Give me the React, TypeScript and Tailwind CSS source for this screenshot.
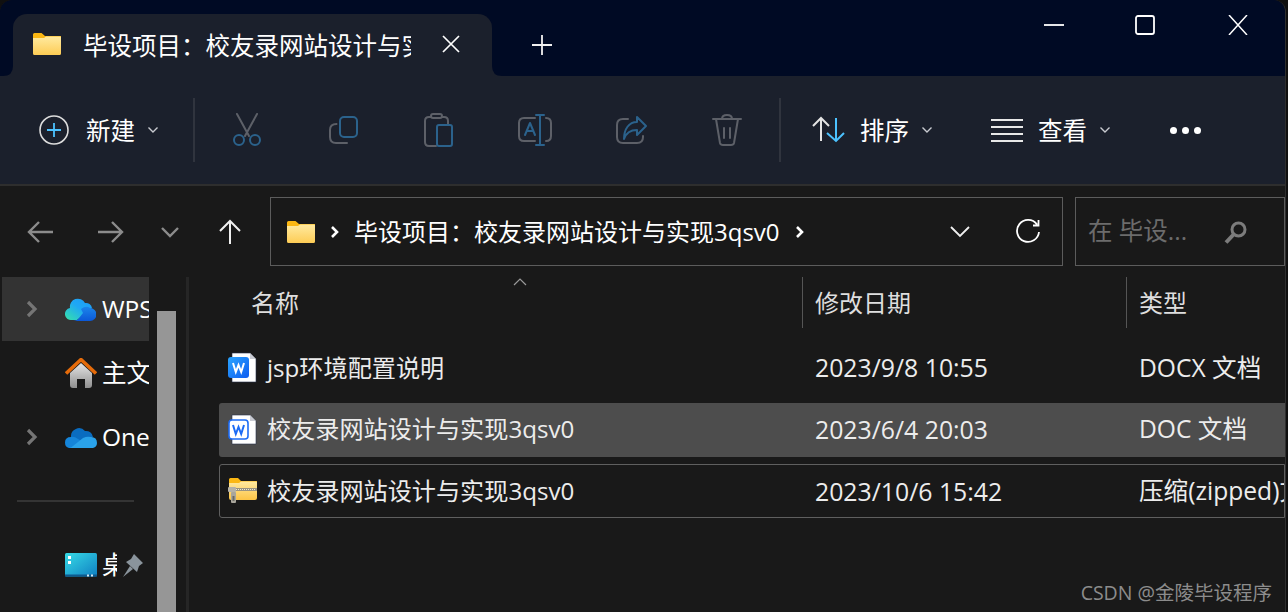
import type { ReactNode } from "react";

const GREY = "#5d6068";
const BLUE = "#2b628c";

function Folder({ w = 28, h = 22 }: { w?: number; h?: number }) {
  return (
    <svg width={w} height={h} viewBox="0 0 28 22" className="shrink-0">
      <defs>
        <linearGradient id="fold" x1="0" y1="0" x2="0" y2="1">
          <stop offset="0" stopColor="#ffeaa0" />
          <stop offset="1" stopColor="#fdcc55" />
        </linearGradient>
      </defs>
      <path d="M0 1.5Q0 0 1.5 0H8.5L12 3H28V8H0Z" fill="#fbb713" />
      <path d="M0 5H11L13 3.5H27Q28 3.5 28 4.5V20.5Q28 22 26.5 22H1.5Q0 22 0 20.5Z" fill="url(#fold)" />
    </svg>
  );
}

function WordIcon({ selected }: { selected?: boolean }) {
  return (
    <svg width="29" height="31" viewBox="0 0 29 31" className="shrink-0">
      <defs>
        <linearGradient id="wd" x1="0" y1="0" x2="1" y2="1">
          <stop offset="0" stopColor="#2ba5ff" />
          <stop offset="1" stopColor="#0e5cf0" />
        </linearGradient>
      </defs>
      <path d="M4 1H22L28 7V30H4Z" fill="#fff" stroke="#26304a" strokeWidth="0.6" />
      <path d="M22 1V7H28Z" fill="#c9cbd2" />
      <rect
        x={selected ? 1 : 0}
        y={selected ? 6 : 5}
        width={selected ? 19 : 21}
        height={selected ? 19 : 21}
        rx="3"
        fill={selected ? "#fff" : "url(#wd)"}
        stroke={selected ? "#1d6cf5" : "none"}
        strokeWidth="1.6"
      />
      <path
        d="M5 11L7.8 20L10.5 13L13.2 20L16 11"
        fill="none"
        stroke={selected ? "#1d6cf5" : "#fff"}
        strokeWidth="2"
      />
    </svg>
  );
}

function ZipIcon() {
  return (
    <svg width="29" height="26" viewBox="0 0 29 26" className="shrink-0">
      <defs>
        <linearGradient id="zipf" x1="0" y1="0" x2="0" y2="1">
          <stop offset="0" stopColor="#ffe9a0" />
          <stop offset="1" stopColor="#fcc445" />
        </linearGradient>
      </defs>
      <path d="M1 1.5Q1 0 2.500 0H10L13 3H29V8H1Z" fill="#fbb713" />
      <path d="M1 5H11L13 3.500H28Q29 3.500 29 4.500V20Q29 22 27 22H3Q1 22 1 20Z" fill="url(#zipf)" />
      <rect x="1" y="10" width="28" height="3" fill="#9a9482" />
      <path d="M4 11.500H28" stroke="#f1ead0" strokeWidth="1" strokeDasharray="1 1" />
      <rect x="0" y="9" width="8" height="5" rx="1" fill="#b5b2a8" />
      <rect x="3" y="14" width="5" height="11" rx="1" fill="#a9a69c" />
      <rect x="4.500" y="18" width="2" height="5" fill="#6c6a62" />
    </svg>
  );
}

function WpsCloud() {
  return (
    <svg width="31" height="23" viewBox="0 0 31 23" className="shrink-0">
      <defs>
        <linearGradient id="wa" x1="0" y1="1" x2="1" y2="0">
          <stop offset="0" stopColor="#36e3a8" />
          <stop offset="0.55" stopColor="#1fa8f5" />
          <stop offset="1" stopColor="#1c9bf5" />
        </linearGradient>
        <linearGradient id="wb" x1="0" y1="0" x2="0" y2="1">
          <stop offset="0" stopColor="#1c86ea" />
          <stop offset="1" stopColor="#0b58d8" />
        </linearGradient>
      </defs>
      <path d="M5 10A8 8 0 0 1 20 5A6 6 0 0 1 27 10L12 22H7A6 6 0 0 1 5 10Z" fill="url(#wa)" />
      <path d="M16 11Q21 7 25 10A6.500 6.500 0 0 1 25 23H8Q12 23 14 20L18 15Z" fill="url(#wb)" />
    </svg>
  );
}

function HomeIcon() {
  return (
    <svg width="32" height="30" viewBox="0 0 32 30" className="shrink-0">
      <defs>
        <linearGradient id="hm" x1="0" y1="0" x2="0" y2="1">
          <stop offset="0" stopColor="#e6e6e6" />
          <stop offset="1" stopColor="#8f8f8f" />
        </linearGradient>
      </defs>
      <path d="M5 15L16 5L27 15V27Q27 30 24 30H20V21H12V30H8Q5 30 5 27Z" fill="url(#hm)" />
      <path d="M1 15.500L16 1.500L31 15.500" fill="none" stroke="#e56b0a" strokeWidth="3.600" strokeLinejoin="round" />
    </svg>
  );
}

function OneDrive() {
  return (
    <svg width="32" height="21" viewBox="0 0 32 21" className="shrink-0">
      <path d="M6 10A8 8 0 0 1 20 4A7 7 0 0 1 28 10L14 18Z" fill="#0a6cc0" />
      <path d="M4 21Q0 20 0 15.500Q0 10 6 10Q9 9 13 12L18 15L12 21Z" fill="#1585da" />
      <path d="M4 21H28Q32 20 32 16Q32 10 26 10Q22 9 18 11L8 19Q6 21 4 21Z" fill="#2aa2ea" />
    </svg>
  );
}

function DesktopIcon() {
  return (
    <svg width="32" height="24" viewBox="0 0 32 24" className="shrink-0">
      <defs>
        <linearGradient id="dk" x1="0" y1="0" x2="1" y2="1">
          <stop offset="0" stopColor="#37dbe6" />
          <stop offset="1" stopColor="#0f7fc2" />
        </linearGradient>
      </defs>
      <rect width="32" height="23.500" rx="1.500" fill="url(#dk)" />
      <rect y="21.500" width="32" height="2" fill="#0d5a8f" />
      <rect x="3" y="3" width="3" height="3" fill="#fff" />
      <rect x="3" y="8" width="3" height="3" fill="#fff" />
      <rect x="22" y="21.500" width="2" height="2" fill="#cfe9f5" />
      <rect x="26" y="21.500" width="2" height="2" fill="#cfe9f5" />
    </svg>
  );
}

function PinIcon() {
  return (
    <svg width="21" height="23" viewBox="0 0 21 23" className="shrink-0">
      <path d="M12 0L21 9L17 12L15 18L4 8L9 5Z" fill="#8a949c" />
      <path d="M8 12L11 15L1 23Z" fill="#8a949c" />
    </svg>
  );
}

function ToolIcon({ children }: { children: ReactNode }) {
  return (
    <div className="flex w-[96px] justify-center">
      <svg width="40" height="40" viewBox="0 0 40 40" fill="none" strokeWidth="2" strokeLinecap="round" strokeLinejoin="round">
        {children}
      </svg>
    </div>
  );
}

function Chevron({ color = "#c9cbd0", size = 12 }: { color?: string; size?: number }) {
  return (
    <svg width={size} height={size} viewBox="0 0 12 12" fill="none" className="shrink-0">
      <path d="M1.500 3.500L6 8L10.500 3.500" stroke={color} strokeWidth="1.400" />
    </svg>
  );
}

function Line({ className }: { className: string }) {
  return <div className={`shrink-0 ${className}`} />;
}

function TitleBar() {
  return (
    <div className="flex h-[76px] shrink-0 items-start bg-[#000a24]">
      <div className="relative mt-[14px] ml-[13px] flex h-[62px] w-[479px] shrink-0 items-center rounded-t-[14px] bg-[#1b202c] pl-[20px] text-white">
        <svg width="10" height="10" viewBox="0 0 10 10" className="absolute bottom-0 -left-[10px]">
          <path d="M10 0V10H0Q10 10 10 0Z" fill="#1b202c" />
        </svg>
        <svg width="10" height="10" viewBox="0 0 10 10" className="absolute right-[-10px] bottom-0">
          <path d="M0 0V10H10Q0 10 0 0Z" fill="#1b202c" />
        </svg>
        <div className="-mt-[3px] flex items-center">
          <Folder />
          <div className="mt-[5px] ml-[22px] w-[328px] overflow-hidden text-[24.5px] leading-[32px] whitespace-nowrap">毕设项目：校友录网站设计与实现3qsv0</div>
          <svg width="20" height="20" viewBox="0 0 20 20" fill="none" stroke="#fff" strokeWidth="1.700" className="ml-[30px]">
            <path d="M2 2L18 18M18 2L2 18" />
          </svg>
        </div>
      </div>
      <svg width="20" height="20" viewBox="0 0 20 20" fill="none" stroke="#f0f0f0" strokeWidth="1.800" className="mt-[35px] ml-[40px] shrink-0">
        <path d="M10 0V20M0 10H20" />
      </svg>
      <div className="mt-[15px] ml-auto flex items-start pr-[37px]">
        <svg width="20" height="20" viewBox="0 0 20 20" fill="none" stroke="#fff" strokeWidth="1.800">
          <path d="M0 10H20" />
        </svg>
        <svg width="20" height="20" viewBox="0 0 20 20" fill="none" stroke="#fff" strokeWidth="1.800" className="ml-[71px]">
          <rect x="1" y="1" width="18" height="18" rx="2" />
        </svg>
        <svg width="20" height="20" viewBox="0 0 20 20" fill="none" stroke="#fff" strokeWidth="1.500" className="ml-[73px]">
          <path d="M1 0L19 20M19 0L1 20" />
        </svg>
      </div>
    </div>
  );
}

function Toolbar() {
  return (
    <div className="flex h-[110px] shrink-0 border-b-2 border-[#2e2e2e] bg-[#1b202c] text-white">
      <div className="flex h-[108px] items-center pl-[39px] text-[24.5px]">
        <svg width="30" height="30" viewBox="0 0 30 30" fill="none" className="shrink-0">
          <circle cx="15" cy="15" r="14" stroke="#dcdcdc" strokeWidth="1.600" />
          <path d="M15 8V22M8 15H22" stroke="#4cc2ff" strokeWidth="1.800" />
        </svg>
        <span className="mt-[2px] ml-[17px]">新建</span>
        <div className="ml-[12px]">
          <Chevron />
        </div>
        <Line className="ml-[34px] h-[64px] w-[2px] bg-[#30343e]" />
        <div className="ml-[4px] flex">
          <ToolIcon>
            <path d="M10 4L22 26M30 4L18 26" stroke={GREY} />
            <circle cx="12" cy="30" r="5" stroke={BLUE} />
            <circle cx="28" cy="30" r="5" stroke={BLUE} />
          </ToolIcon>
          <ToolIcon>
            <path d="M13.500 14Q7 14 7 20V27Q7 33 13 33H24" stroke={GREY} />
            <rect x="17" y="7" width="17" height="20" rx="4" stroke={BLUE} />
          </ToolIcon>
          <ToolIcon>
            <path d="M12 7H10Q6 7 6 11V32Q6 36 10 36H17M23 7H25Q29 7 29 11V14" stroke={GREY} />
            <rect x="12" y="4" width="11" height="4" rx="2" stroke={GREY} />
            <rect x="18" y="15" width="15" height="21" rx="2" stroke={BLUE} />
          </ToolIcon>
          <ToolIcon>
            <path d="M20 8H9Q4 8 4 13V26Q4 31 9 31H20M31 8Q36 8 36 13V26Q36 31 31 31" stroke={GREY} />
            <path d="M25 5V35M21 5H29M21 35H29M10 25L15 13L20 25M12 21H18" stroke={BLUE} />
          </ToolIcon>
          <ToolIcon>
            <path d="M17 9H12Q6 9 6 15V27Q6 33 12 33H26Q32 33 32 27V26" stroke={GREY} />
            <path d="M26 7L35 16L26 25V20C19 20 15 23 13 29C13 19 18 12 26 12Z" stroke={BLUE} />
          </ToolIcon>
          <ToolIcon>
            <path d="M6 9H34M9 9L13 33Q13.500 35 16 35H24Q26.500 35 27 33L31 9M15 9Q15 5 20 5Q25 5 25 9M17 18V28M23 18V28" stroke={GREY} />
          </ToolIcon>
        </div>
        <Line className="ml-[4px] h-[64px] w-[2px] bg-[#30343e]" />
        <svg width="40" height="40" viewBox="0 0 40 40" fill="none" strokeWidth="2" className="ml-[29px] shrink-0">
          <path d="M11 8V31M3 16L11 8L19 16" stroke="#e4e4e4" />
          <path d="M26 8V31M17 23L26 31L34 23" stroke="#4cc2ff" />
        </svg>
        <span className="mt-[2px] ml-[10px]">排序</span>
        <div className="ml-[12px]">
          <Chevron />
        </div>
        <div className="ml-[58px] flex h-[23px] w-[32px] shrink-0 flex-col justify-between">
          <Line className="h-[2px] bg-[#e8e8e8]" />
          <Line className="h-[2px] bg-[#e8e8e8]" />
          <Line className="h-[2px] bg-[#e8e8e8]" />
          <Line className="h-[2px] bg-[#e8e8e8]" />
        </div>
        <span className="mt-[2px] ml-[15px]">查看</span>
        <div className="ml-[12px]">
          <Chevron />
        </div>
        <div className="ml-[59px] flex gap-[5px]">
          <Line className="h-[7px] w-[7px] rounded-full bg-white" />
          <Line className="h-[7px] w-[7px] rounded-full bg-white" />
          <Line className="h-[7px] w-[7px] rounded-full bg-white" />
        </div>
      </div>
    </div>
  );
}

function NavRow() {
  return (
    <div className="flex h-[91px] shrink-0 items-center text-white">
      <svg width="28" height="24" viewBox="0 0 28 24" fill="none" stroke="#8c8c8c" strokeWidth="2.400" className="ml-[27px] shrink-0">
        <path d="M26 12H2M12 2L2 12L12 22" />
      </svg>
      <svg width="28" height="24" viewBox="0 0 28 24" fill="none" stroke="#8c8c8c" strokeWidth="2.400" className="ml-[41px] shrink-0">
        <path d="M2 12H26M16 2L26 12L16 22" />
      </svg>
      <svg width="20" height="12" viewBox="0 0 20 12" fill="none" stroke="#8c8c8c" strokeWidth="2.400" className="ml-[36px] shrink-0">
        <path d="M2 2L10 10L18 2" />
      </svg>
      <svg width="24" height="26" viewBox="0 0 24 26" fill="none" stroke="#f0f0f0" strokeWidth="2" className="ml-[38px] shrink-0">
        <path d="M12 25V2M2 12L12 2L22 12" />
      </svg>
      <div className="ml-[28px] flex h-[69px] w-[793px] shrink-0 items-center border border-[#5c5c5c] pl-[16px]">
        <Folder />
        <svg width="10" height="14" viewBox="0 0 10 14" fill="none" stroke="#fff" strokeWidth="2.600" className="ml-[15px] shrink-0">
          <path d="M2 2L7 7L2 12" />
        </svg>
        <span className="ml-[14px] w-[426px] text-[24px] whitespace-nowrap">毕设项目：校友录网站设计与实现3qsv0</span>
        <svg width="10" height="14" viewBox="0 0 10 14" fill="none" stroke="#fff" strokeWidth="2.600" className="ml-[15px] shrink-0">
          <path d="M2 2L7 7L2 12" />
        </svg>
        <svg width="20" height="12" viewBox="0 0 20 12" fill="none" stroke="#f0f0f0" strokeWidth="1.800" className="ml-[145px] shrink-0">
          <path d="M1 1L10 10L19 1" />
        </svg>
        <svg width="24" height="26" viewBox="0 0 24 26" fill="none" stroke="#fff" strokeWidth="1.800" className="ml-[46px] shrink-0">
          <path d="M21 5.500A11 11 0 1 0 23 13M22.500 1V6.500H17" />
        </svg>
      </div>
      <div className="ml-[12px] flex h-[69px] w-[210px] shrink-0 items-center justify-between border border-[#5c5c5c] pr-[36px] pl-[12px] text-[24.5px] text-[#6c6c6c]">
        <span className="whitespace-nowrap">在 毕设...</span>
        <svg width="24" height="24" viewBox="0 0 24 24" fill="none" stroke="#7c7c7c" className="shrink-0">
          <circle cx="14.500" cy="9.500" r="6.500" strokeWidth="3" />
          <path d="M10 14L2 22.500" strokeWidth="4" />
        </svg>
      </div>
    </div>
  );
}

function SideRow({ icon, label, arrow, active }: { icon: ReactNode; label: string; arrow?: boolean; active?: boolean }) {
  return (
    <div className={`flex h-[64px] items-center overflow-hidden ${active ? "bg-[#333333]" : ""}`}>
      <div className="flex w-[63px] shrink-0 justify-center pr-[3px]">
        {arrow && (
          <svg width="14" height="18" viewBox="0 0 14 18" fill="none" stroke="#757575" strokeWidth="3.200">
            <path d="M3 2L10 9L3 16" />
          </svg>
        )}
      </div>
      <div className="flex w-[37px] shrink-0">{icon}</div>
      <span className="text-[24.5px] whitespace-nowrap text-white">{label}</span>
    </div>
  );
}

function Sidebar() {
  return (
    <div className="flex w-[189px] shrink-0 border-r-[3px] border-[#262626]">
      <div className="ml-[2px] w-[147px] shrink-0">
        <SideRow active arrow icon={<WpsCloud />} label="WPS网盘" />
        <SideRow icon={<HomeIcon />} label="主文件夹" />
        <SideRow arrow icon={<OneDrive />} label="OneDrive" />
        <div className="flex h-[64px] items-center pl-[15px]">
          <Line className="h-[2px] w-[117px] bg-[#343434]" />
        </div>
        <div className="flex h-[64px] items-center pl-[63px]">
          <DesktopIcon />
          <div className="ml-[5px] w-[15px] overflow-hidden text-[24.5px] whitespace-nowrap text-white">桌面</div>
          <div className="ml-[5px]">
            <PinIcon />
          </div>
        </div>
      </div>
      <div className="ml-[8px] w-[19px] shrink-0 pt-[34px]">
        <div className="h-full bg-[#969696]" />
      </div>
    </div>
  );
}

function HeaderCell({ width, label, pad }: { width: string; label: string; pad: string }) {
  return (
    <div className={`flex h-[51px] shrink-0 items-center text-[24px] text-[#dedede] ${width} ${pad}`}>{label}</div>
  );
}

function FileRow({ icon, name, date, type, className }: { icon: ReactNode; name: string; date: string; type: string; className: string }) {
  return (
    <div className={`flex h-[54px] items-center overflow-hidden text-[24.15px] whitespace-nowrap text-[#ececec] ${className}`}>
      <div className="flex w-[596px] shrink-0 items-center pl-[9px]">
        <div className="flex w-[39px] shrink-0">{icon}</div>
        <span>{name}</span>
      </div>
      <span className="w-[324px] shrink-0 text-[24.8px]">{date}</span>
      <span className="text-[24.6px]">{type}</span>
    </div>
  );
}

function FileList() {
  return (
    <div className="relative flex-1 overflow-hidden">
      <svg width="14" height="8" viewBox="0 0 14 8" fill="none" stroke="#9a9a9a" strokeWidth="1.200" className="absolute top-[1px] left-[324px]">
        <path d="M1 7L7 1L13 7" />
      </svg>
      <div className="flex">
        <HeaderCell width="w-[614px]" pad="pl-[62px] border-r border-[#555555]" label="名称" />
        <HeaderCell width="w-[324px]" pad="pl-[12px] border-r border-[#555555]" label="修改日期" />
        <HeaderCell width="w-[100px]" pad="pl-[12px]" label="类型" />
      </div>
      <div className="mt-[13px] ml-[30px] flex flex-col gap-[7.500px]">
        <FileRow className="" icon={<WordIcon />} name="jsp环境配置说明" date="2023/9/8 10:55" type="DOCX 文档" />
        <FileRow className="rounded-l-[3px] bg-[#4d4d4d]" icon={<WordIcon selected />} name="校友录网站设计与实现3qsv0" date="2023/6/4 20:03" type="DOC 文档" />
        <FileRow className="rounded-l-[3px] pt-[1px] outline-1 -outline-offset-1 outline-[#5f5f5f]" icon={<ZipIcon />} name="校友录网站设计与实现3qsv0" date="2023/10/6 15:42" type="压缩(zipped)文件夹" />
      </div>
    </div>
  );
}

export default function App() {
  return (
    <div className="relative h-[612px] w-[1288px] overflow-hidden bg-[#101010] font-['Open_Sans','Noto_Sans_CJK_SC',sans-serif]">
      <div className="flex h-[612px] w-[1286px] flex-col overflow-hidden rounded-t-[12px] border-r border-[#2f2f2f] bg-[#191919]">
        <TitleBar />
        <Toolbar />
        <NavRow />
        <div className="flex min-h-0 flex-1">
          <Sidebar />
          <FileList />
        </div>
      </div>
      <div className="absolute right-[16px] bottom-[6px] text-[19.500px] leading-[26px] text-[#8c8c8c]">CSDN @金陵毕设程序</div>
    </div>
  );
}
